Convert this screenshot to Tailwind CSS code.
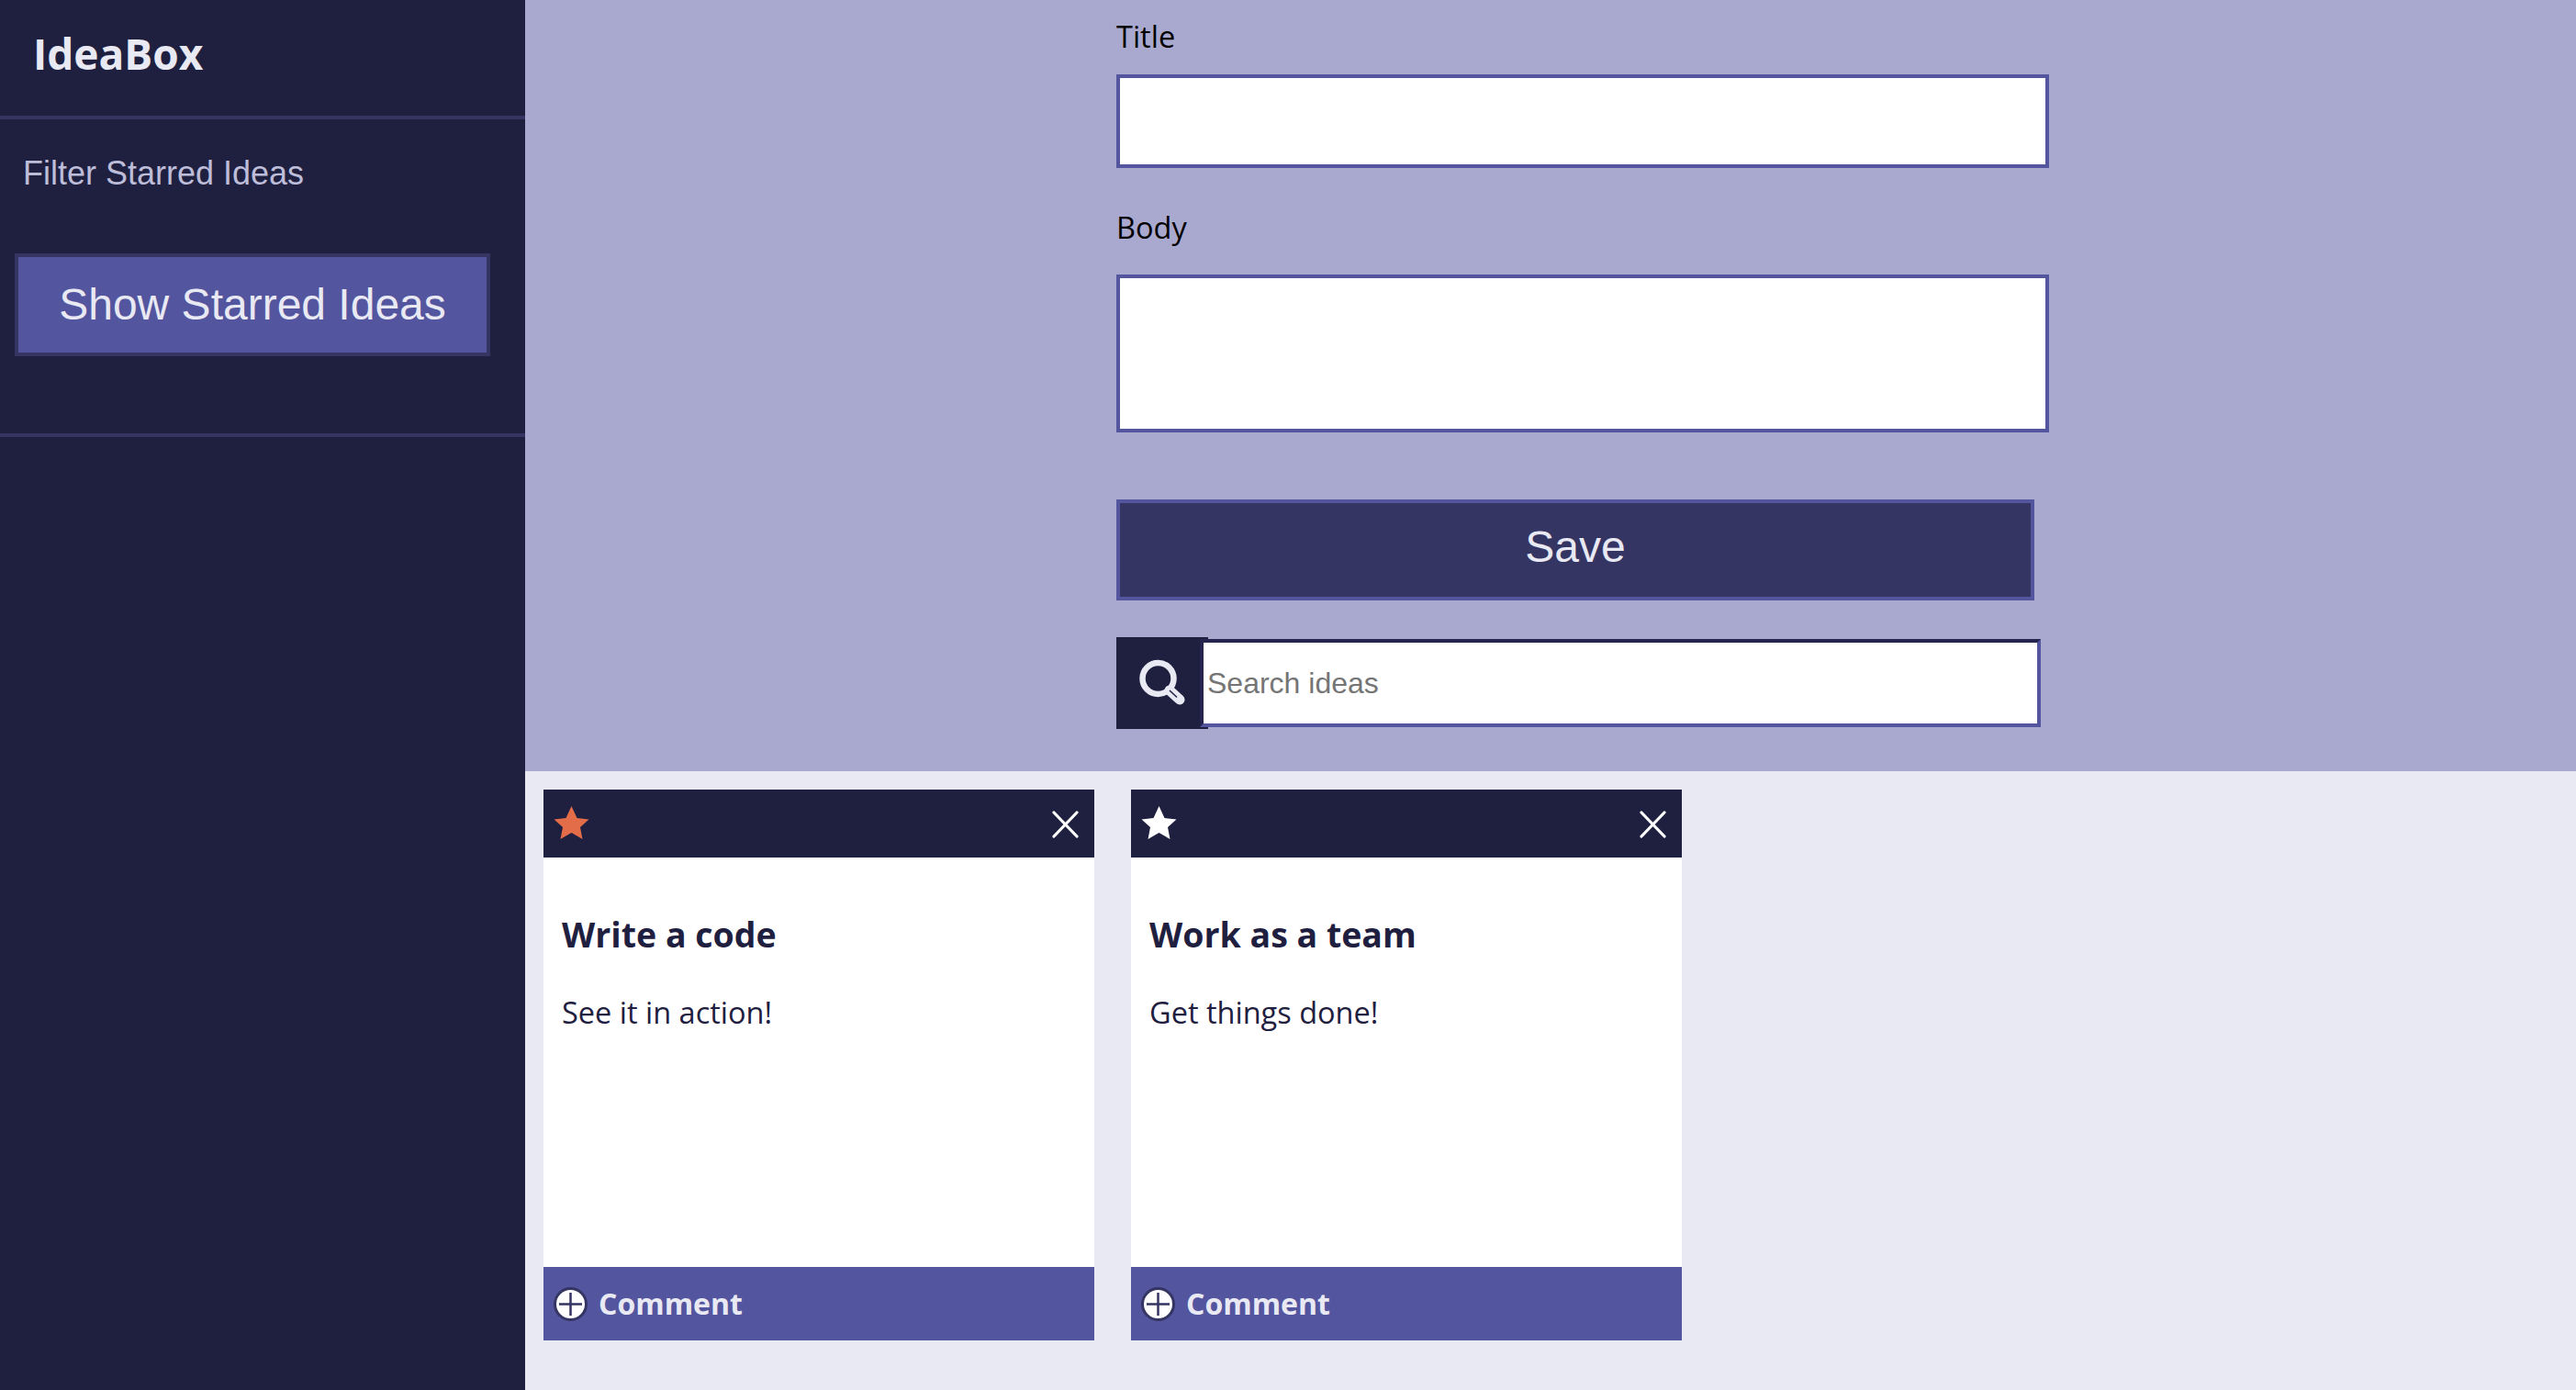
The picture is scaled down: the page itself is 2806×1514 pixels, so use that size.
<!DOCTYPE html>
<html lang="en">
<head>
<meta charset="utf-8">
<title>IdeaBox</title>
<script src="https://cdn.jsdelivr.net/npm/@tailwindcss/browser@4"></script>
</head>
<body class="m-0 bg-[#e9e9f3]">
<div class="flex h-[1514px] w-[2806px] overflow-hidden font-['Open_Sans',sans-serif]">
  <aside class="flex w-[572px] shrink-0 flex-col bg-[#1f2040]">
    <div class="h-[130px] border-b-4 border-[#353564] pl-[36px] pt-[25px]">
      <h1 class="text-[46px] leading-[66px] font-bold text-[#e9e9f3]">IdeaBox</h1>
    </div>
    <div class="h-[346px] border-b-4 border-[#353564] pl-[25px] pt-[37px]">
      <h2 class="font-['Liberation_Sans',sans-serif] text-[36px] leading-[44px] text-[#bdbdd9]">Filter Starred Ideas</h2>
      <button class="mt-[65px] -ml-[9px] h-[112px] w-[518px] border-4 border-[#353564] bg-[#54559f] font-['Liberation_Sans',sans-serif] text-[48px] text-[#e9e9f3]">Show Starred Ideas</button>
    </div>
  </aside>
  <main class="flex min-w-0 flex-1 flex-col">
    <section class="h-[840px] bg-[#a9a9cf] pl-[644px] pt-[18px]">
      <label class="block h-[44px] text-[32.5px] leading-[44px] text-black">Title</label>
      <input type="text" class="mt-[19px] block h-[102px] w-[1016px] border-4 border-[#54559f] bg-white" />
      <label class="mt-[43px] block h-[44px] text-[32.5px] leading-[44px] text-black">Body</label>
      <textarea class="mt-[29px] block h-[172px] w-[1016px] resize-none border-4 border-[#54559f] bg-white"></textarea>
      <button class="mt-[73px] block h-[110px] w-[1000px] border-4 border-[#54559f] bg-[#353564] pb-[6px] font-['Liberation_Sans',sans-serif] text-[48px] text-[#e9e9f3]">Save</button>
      <div class="mt-[40px] flex h-[100px] items-center">
        <div class="flex h-[100px] w-[100px] shrink-0 items-center justify-center bg-[#1f2040]">
          <svg width="100" height="100" viewBox="0 0 100 100" fill="none">
            <circle cx="45.5" cy="45" r="17" stroke="#e9e9f3" stroke-width="6.5"/>
            <path d="M58 58 L69 68" stroke="#e9e9f3" stroke-width="11" stroke-linecap="round"/>
            <path d="M58 58 L66 65.5" stroke="#1f2040" stroke-width="1.5"/>
          </svg>
        </div>
        <input type="text" placeholder="Search ideas" class="relative -ml-[9px] h-[96px] w-[916px] border-4 border-t-[#252550] border-l-[#252550] border-r-[#54559f] border-b-[#54559f] bg-white pl-[4px] font-['Liberation_Sans',sans-serif] text-[32px] placeholder:text-[#757575]" />
      </div>
    </section>
    <section class="flex flex-1 items-start gap-[40px] pl-[20px] pt-[20px]">
      <article class="flex h-[600px] w-[600px] flex-col bg-white">
        <div class="flex h-[74px] items-center justify-between bg-[#1f2040] pl-[11px] pr-[17px]">
          <svg class="-mt-[2px]" width="39" height="36" viewBox="0 0 39 36"><polygon fill="#e36d48" points="19.5,0 25.5,13 38.5,14.5 29,23 31.5,36 19.5,29 7.5,36 10,23 0.5,14.5 13.5,13"/></svg>
          <svg class="mt-[2px]" width="30" height="30" viewBox="0 0 30 30"><path d="M3 2 L28 28 M28 2 L3 28" stroke="#fff" stroke-width="3.2" stroke-linecap="round"/></svg>
        </div>
        <div class="flex-1 px-[20px] pt-[58px]">
          <h3 class="text-[37.5px] leading-[52px] font-bold text-[#1f2040]">Write a code</h3>
          <p class="mt-[37px] text-[32.5px] leading-[44px] text-[#1f2040]">See it in action!</p>
        </div>
        <div class="flex h-[80px] items-center gap-[12px] bg-[#54559f] pl-[11px]">
          <svg width="37" height="37" viewBox="0 0 37 37"><circle cx="18.5" cy="18.5" r="17" fill="#fff" stroke="#353564" stroke-width="3"/><path d="M6 18.5 H31 M18.5 6 V31" stroke="#353564" stroke-width="2.5"/></svg>
          <span class="text-[32px] leading-[44px] font-bold text-[#e9e9f3]">Comment</span>
        </div>
      </article>
      <article class="flex h-[600px] w-[600px] flex-col bg-white">
        <div class="flex h-[74px] items-center justify-between bg-[#1f2040] pl-[11px] pr-[17px]">
          <svg class="-mt-[2px]" width="39" height="36" viewBox="0 0 39 36"><polygon fill="#fff" points="19.5,0 25.5,13 38.5,14.5 29,23 31.5,36 19.5,29 7.5,36 10,23 0.5,14.5 13.5,13"/></svg>
          <svg class="mt-[2px]" width="30" height="30" viewBox="0 0 30 30"><path d="M3 2 L28 28 M28 2 L3 28" stroke="#fff" stroke-width="3.2" stroke-linecap="round"/></svg>
        </div>
        <div class="flex-1 px-[20px] pt-[58px]">
          <h3 class="text-[37.5px] leading-[52px] font-bold text-[#1f2040]">Work as a team</h3>
          <p class="mt-[37px] text-[32.5px] leading-[44px] text-[#1f2040]">Get things done!</p>
        </div>
        <div class="flex h-[80px] items-center gap-[12px] bg-[#54559f] pl-[11px]">
          <svg width="37" height="37" viewBox="0 0 37 37"><circle cx="18.5" cy="18.5" r="17" fill="#fff" stroke="#353564" stroke-width="3"/><path d="M6 18.5 H31 M18.5 6 V31" stroke="#353564" stroke-width="2.5"/></svg>
          <span class="text-[32px] leading-[44px] font-bold text-[#e9e9f3]">Comment</span>
        </div>
      </article>
    </section>
  </main>
</div>
</body>
</html>
